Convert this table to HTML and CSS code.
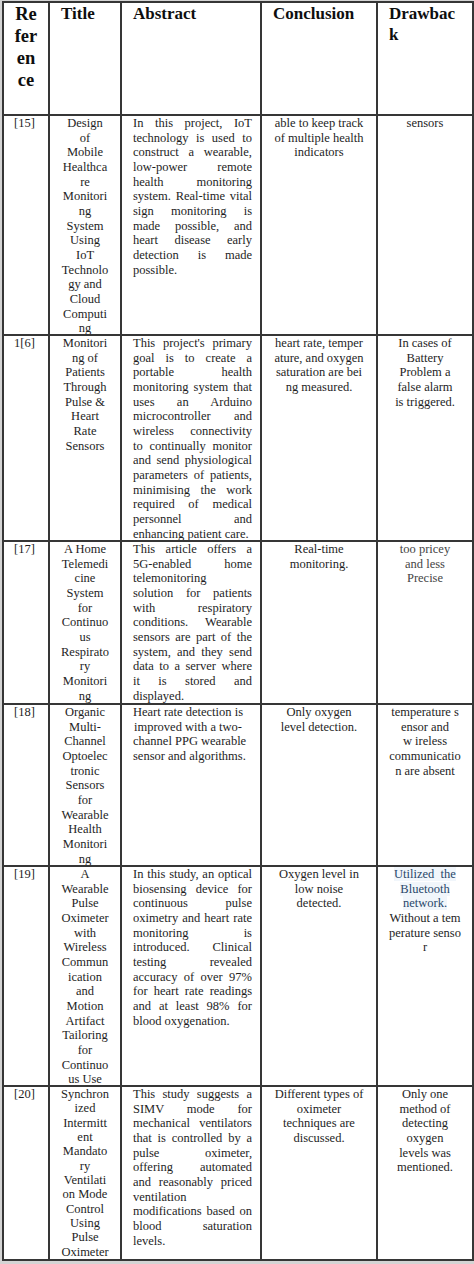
FILE: index.html
```html
<!DOCTYPE html>
<html lang="en">
<head>
<meta charset="utf-8">
<title>Literature review table</title>
<link rel="stylesheet" href="styles.css">
</head>
<body>
<div class="table">
  <div class="cell head ref">Re<br>fer<br>en<br>ce</div>
  <div class="cell head">Title</div>
  <div class="cell head">Abstract</div>
  <div class="cell head">Conclusion</div>
  <div class="cell head">Drawbac<br>k</div>

  <!-- [15] -->
  <div class="cell num">[15]</div>
  <div class="cell center">Design<br>of<br>Mobile<br>Healthca<br>re<br>Monitori<br>ng<br>System<br>Using<br>IoT<br>Technolo<br>gy and<br>Cloud<br>Computi<br>ng</div>
  <div class="cell abs">
    <span class="j">In this project, IoT</span>
    <span class="j">technology is used to</span>
    <span class="j">construct a wearable,</span>
    <span class="j">low-power remote</span>
    <span class="j">health monitoring</span>
    <span class="j">system. Real-time vital</span>
    <span class="j">sign monitoring is</span>
    <span class="j">made possible, and</span>
    <span class="j">heart disease early</span>
    <span class="j">detection is made</span>
    <span class="l">possible.</span>
  </div>
  <div class="cell center">able to keep track<br>of multiple health<br>indicators</div>
  <div class="cell center">sensors</div>

  <!-- 1[6] -->
  <div class="cell num">1[6]</div>
  <div class="cell center">Monitori<br>ng of<br>Patients<br>Through<br>Pulse &amp;<br>Heart<br>Rate<br>Sensors</div>
  <div class="cell abs">
    <span class="j">This project's primary</span>
    <span class="j">goal is to create a</span>
    <span class="j">portable health</span>
    <span class="j">monitoring system that</span>
    <span class="j">uses an Arduino</span>
    <span class="j">microcontroller and</span>
    <span class="j">wireless connectivity</span>
    <span class="j">to continually monitor</span>
    <span class="j">and send physiological</span>
    <span class="j">parameters of patients,</span>
    <span class="j">minimising the work</span>
    <span class="j">required of medical</span>
    <span class="j">personnel and</span>
    <span class="l">enhancing patient care.</span>
  </div>
  <div class="cell center">heart rate, temper<br>ature, and oxygen<br>saturation are bei<br>ng measured.</div>
  <div class="cell center">In cases of<br>Battery<br>Problem a<br>false alarm<br>is triggered.</div>

  <!-- [17] -->
  <div class="cell num">[17]</div>
  <div class="cell center">A Home<br>Telemedi<br>cine<br>System<br>for<br>Continuo<br>us<br>Respirato<br>ry<br>Monitori<br>ng</div>
  <div class="cell abs">
    <span class="j">This article offers a</span>
    <span class="j">5G-enabled home</span>
    <span class="l">telemonitoring</span>
    <span class="j">solution for patients</span>
    <span class="j">with respiratory</span>
    <span class="j">conditions. Wearable</span>
    <span class="j">sensors are part of the</span>
    <span class="j">system, and they send</span>
    <span class="j">data to a server where</span>
    <span class="j">it is stored and</span>
    <span class="l">displayed.</span>
  </div>
  <div class="cell center">Real-time<br>monitoring.</div>
  <div class="cell center soft">too pricey<br>and less<br>Precise</div>

  <!-- [18] -->
  <div class="cell num">[18]</div>
  <div class="cell center">Organic<br>Multi-<br>Channel<br>Optoelec<br>tronic<br>Sensors<br>for<br>Wearable<br>Health<br>Monitori<br>ng</div>
  <div class="cell abs">
    <span class="l">Heart rate detection is</span>
    <span class="l indent">improved with a two-</span>
    <span class="l">channel PPG wearable</span>
    <span class="l">sensor and algorithms.</span>
  </div>
  <div class="cell center">Only oxygen<br>level detection.</div>
  <div class="cell center">temperature s<br>ensor and<br>w ireless<br>communicatio<br>n are absent</div>

  <!-- [19] -->
  <div class="cell num">[19]</div>
  <div class="cell center">A<br>Wearable<br>Pulse<br>Oximeter<br>with<br>Wireless<br>Commun<br>ication<br>and<br>Motion<br>Artifact<br>Tailoring<br>for<br>Continuo<br>us Use</div>
  <div class="cell abs">
    <span class="j">In this study, an optical</span>
    <span class="j">biosensing device for</span>
    <span class="j">continuous pulse</span>
    <span class="j">oximetry and heart rate</span>
    <span class="j">monitoring is</span>
    <span class="j">introduced. Clinical</span>
    <span class="j">testing revealed</span>
    <span class="j">accuracy of over 97%</span>
    <span class="j">for heart rate readings</span>
    <span class="j">and at least 98% for</span>
    <span class="l">blood oxygenation.</span>
  </div>
  <div class="cell center">Oxygen level in<br>low noise<br>detected.</div>
  <div class="cell center"><span class="hl">Utilized&nbsp; the<br>Bluetooth<br>network.</span><br>Without a tem<br>perature senso<br>r</div>

  <!-- [20] -->
  <div class="cell num">[20]</div>
  <div class="cell center tight">Synchron<br>ized<br>Intermitt<br>ent<br>Mandato<br>ry<br>Ventilati<br>on Mode<br>Control<br>Using<br>Pulse<br>Oximeter</div>
  <div class="cell abs">
    <span class="j">This study suggests a</span>
    <span class="j">SIMV mode for</span>
    <span class="j">mechanical ventilators</span>
    <span class="j">that is controlled by a</span>
    <span class="j">pulse oximeter,</span>
    <span class="j">offering automated</span>
    <span class="j">and reasonably priced</span>
    <span class="l">ventilation</span>
    <span class="j">modifications based on</span>
    <span class="j">blood saturation</span>
    <span class="l">levels.</span>
  </div>
  <div class="cell center">Different types of<br>oximeter<br>techniques are<br>discussed.</div>
  <div class="cell center">Only one<br>method of<br>detecting<br>oxygen<br>levels was<br>mentioned.</div>
</div>
</body>
</html>
```

FILE: styles.css
```css
html, body {
  margin: 0;
  padding: 0;
  background: #d4d4d4;
}

body {
  padding: 1px 0 0 2px;
  font-family: "Liberation Serif", "Times New Roman", serif;
  color: #1e1e1e;
}

.table {
  width: 472px;
  box-sizing: border-box;
  display: grid;
  grid-template-columns: 44px 70px 138px 114px 94px;
  grid-template-rows: 111px 218px 204px 161px 160px 218px 172px;
  gap: 2px;
  padding: 2px;
  background: #363636;
}

.cell {
  background: #ffffff;
  overflow: hidden;
  font-size: 12.5px;
  line-height: 14.67px;
  white-space: nowrap;
}

.head {
  font-weight: bold;
  font-size: 17px;
  line-height: 21px;
  color: #0e0e0e;
  padding-left: 11px;
}

.head.ref {
  font-size: 18.5px;
  line-height: 22px;
  padding-left: 0;
  text-align: center;
}

.num {
  text-align: center;
  padding-right: 3px;
}

.center {
  text-align: center;
}

.tight {
  line-height: 14.35px;
}

.abs {
  padding: 0 8px 0 11px;
  white-space: normal;
}

.abs .j,
.abs .l {
  display: block;
}

.abs .j {
  text-align: justify;
  text-align-last: justify;
}

.abs .l {
  text-align: left;
  white-space: nowrap;
}

.abs .indent {
  padding-left: 1px;
}

.soft {
  color: #454545;
}

.hl {
  color: #28476a;
  background: #f1f6fb;
}
```
